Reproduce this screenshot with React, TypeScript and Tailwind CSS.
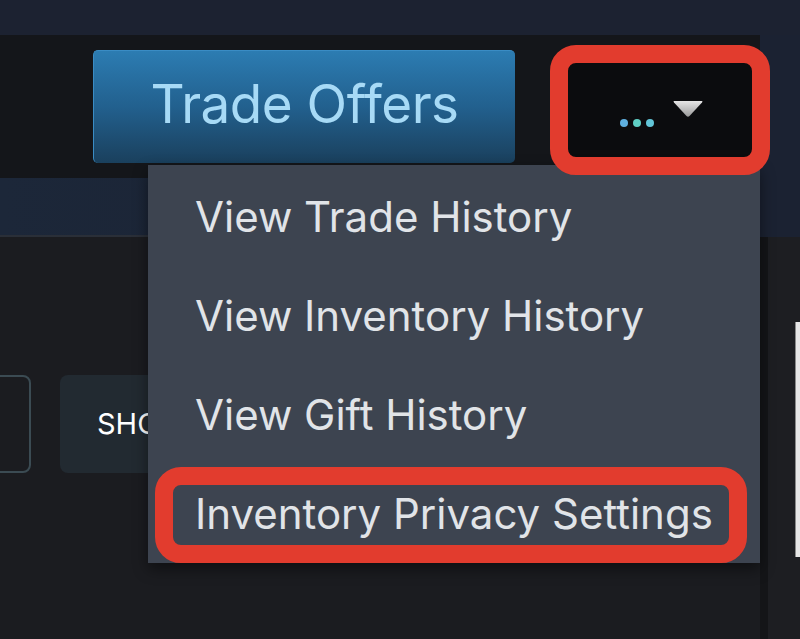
const menuItems = [
  "View Trade History",
  "View Inventory History",
  "View Gift History",
  "Inventory Privacy Settings",
]

function MoreButton() {
  return (
    <div className="relative mt-[13px] ml-[53px]">
      <button className="flex h-[94px] w-[184px] items-center rounded-[6px] bg-[#0b0c0e] pl-[52px]">
        <span className="mt-[26px] flex gap-[5px]">
          <span className="h-[8px] w-[8px] rounded-full bg-[#5fb0df]" />
          <span className="h-[8px] w-[8px] rounded-full bg-[#5fcfc4]" />
          <span className="h-[8px] w-[8px] rounded-full bg-[#62c6d8]" />
        </span>
        <svg width="32" height="18" viewBox="0 0 32 18" className="ml-[18px] mt-[-2px]">
          <defs>
            <linearGradient id="tri" x1="0" y1="0" x2="0" y2="1">
              <stop offset="0" stopColor="#e6e6e6" />
              <stop offset="1" stopColor="#9a9a9a" />
            </linearGradient>
          </defs>
          <path d="M2 1 H30 Q31 1 30 2.5 L17.5 16 Q16 17.5 14.5 16 L2 2.5 Q1 1 2 1 Z" fill="url(#tri)" />
        </svg>
      </button>
      {/* annotation ring */}
      <div className="pointer-events-none absolute -inset-[18px] z-20 rounded-[26px] border-[18px] border-[#e23c2e]" />
    </div>
  )
}

export default function App() {
  return (
    <div
      className="relative h-[639px] w-[800px] overflow-hidden bg-[#1b1c20]"
      style={{ fontFamily: 'Inter, "Open Sans", sans-serif' }}
    >
      <div className="h-[35px] bg-[#1c2231]" />

      <div className="flex">
        <div className="flex w-[760px] flex-col">
          <div className="flex h-[143px] items-start bg-[#14161a] pl-[93px] pt-[15px]">
            <button className="flex h-[113px] w-[422px] items-center justify-center rounded-[5px] border-t border-l border-[#3a8cc4] bg-gradient-to-b from-[#2c7cb2] via-[#22608e] to-[#1a405d] pb-[4px] text-[53px] tracking-[-0.5px] text-[#a7daf6]">
              Trade Offers
            </button>
            <MoreButton />
          </div>
          <div className="h-[57px] bg-gradient-to-r from-[#1c2739] to-[#1a2130]" />
          <div className="h-[2px] bg-[#2a2f38]" />
        </div>
        <div className="flex-1 bg-[#1b2232]" />
      </div>

      <div className="flex h-[402px]">
        <div className="w-[760px] pt-[138px]">
          <div className="flex items-start">
            <div className="ml-[-12px] h-[98px] w-[43px] rounded-[8px] border-2 border-[#3b4b53]" />
            <div className="ml-[29px] flex h-[98px] w-[150px] items-center rounded-[8px] bg-[#222a31] pl-[37px] text-[29px] text-white">
              SHOW
            </div>
          </div>
        </div>
        <div className="flex flex-1 bg-[#1d1e22]">
          <div className="w-[8px] bg-[#141518]" />
          <div className="flex-1" />
          <div className="mt-[85px] h-[235px] w-[5px] border-l border-[#8a8a8a] bg-[#e6e6e6]" />
        </div>
      </div>

      {/* dropdown menu */}
      <div className="absolute left-[148px] top-[165px] z-10 flex h-[398px] w-[612px] flex-col bg-[#3d4450] pt-[2px] shadow-[0_6px_14px_rgba(0,0,0,0.45)]">
        {menuItems.map((item, i) => (
          <div key={i} className="relative flex h-[99px] items-center pl-[47px] text-[42px] leading-none text-[#e1e4e8]">
            {item}
            {i === 3 && (
              <div className="pointer-events-none absolute left-[7px] top-[3px] h-[96px] w-[592px] rounded-[26px] border-[18px] border-[#e23c2e]" />
            )}
          </div>
        ))}
      </div>
    </div>
  )
}
